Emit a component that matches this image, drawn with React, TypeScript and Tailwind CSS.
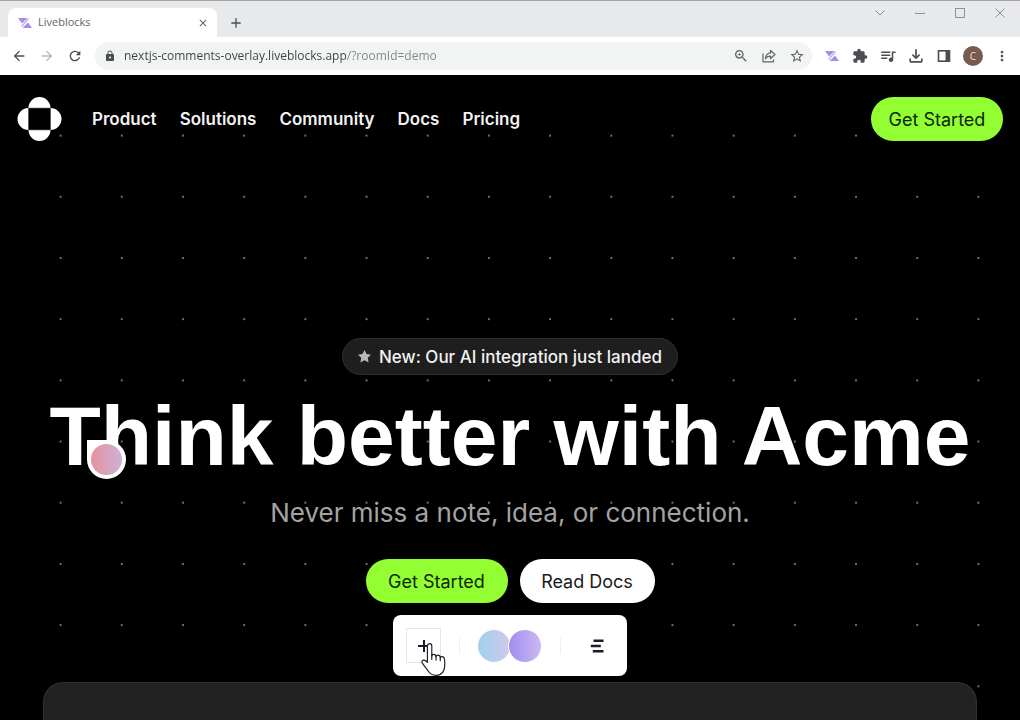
import React from 'react';
import {
    MdArrowBack,
    MdArrowForward,
    MdClose,
    MdExtension,
    MdAdd,
    MdLock,
    MdMoreVert,
    MdOutlineFileDownload,
    MdQueueMusic,
    MdRefresh,
    MdStarBorder,
    MdZoomIn,
} from 'react-icons/md';

const navLinks = ['Product', 'Solutions', 'Community', 'Docs', 'Pricing'];

const LiveblocksMark: React.FC = () => (
    <svg width="14" height="12" viewBox="0 0 14 12" className="shrink-0" aria-hidden="true">
        <path d="M0 1h9.500L4 6.500z" fill="#a78bea" />
        <path d="M14 11H4.500L10 5.500z" fill="#a78bea" />
        <path d="M3.500 9.500l7-8" stroke="#c3b2f2" strokeWidth="1.500" />
    </svg>
);

const ShareIcon: React.FC = () => (
    <svg width="16" height="16" viewBox="0 0 16 16" fill="none" stroke="#5f6368" strokeWidth="1.200" strokeLinejoin="round" aria-hidden="true">
        <path d="M2 5.500v8.300h10.500v-2.300" />
        <path d="M9.500 2.500l4.500 4-4.500 4V8.200c-2.500 0-4 .8-5 2.600.2-3.300 1.800-5.600 5-6z" />
    </svg>
);

const SidePanelIcon: React.FC = () => (
    <svg width="14" height="14" viewBox="0 0 14 14" className="shrink-0" aria-hidden="true">
        <rect x="1.500" y="1.800" width="11" height="10.400" fill="none" stroke="#4a4d51" strokeWidth="1.600" />
        <path d="M8.500 1.500h4v11h-4z" fill="#4a4d51" />
    </svg>
);

const HandCursor: React.FC = () => (
    <svg width="31" height="37" viewBox="0 0 28 34" aria-hidden="true">
        <path
            d="M9.500 2.500c1.300 0 2 .9 2 2.100v9.200c.1-1 .8-1.600 1.900-1.600 1.200 0 1.900.8 2 2 .3-.8 1-1.200 1.900-1.200 1.300 0 2 .9 2 2.200.3-.5.900-.8 1.600-.8 1.400 0 2.100 1 2.300 2.400.5 4.300.8 8.200-1.400 11.600-1.400 2.200-3.600 3.100-6.300 3.100-3.300 0-5.300-1-7-3.500l-5.400-7.200c-1.600-2.100-.2-3.700 1.600-3.200 1 .3 1.900 1.100 2.800 2.100V4.600c0-1.200.7-2.100 2-2.100z"
            fill="white"
            stroke="#222"
            strokeWidth="1.100"
            strokeLinejoin="round"
        />
        <path d="M11.500 13v4M15.400 14v3.500M19.300 15v3" stroke="#222" strokeWidth="1.100" strokeLinecap="round" />
    </svg>
);

const TabStrip: React.FC = () => (
    <div className="flex items-end h-[37px] bg-[#e8e9eb] border-t border-[#a5a5a7] pl-2">
        <div className="flex items-center w-[209px] h-[29px] bg-white rounded-t-lg pl-[10px] pr-2 gap-[6px] text-[11px] text-[#5f6368]">
            <LiveblocksMark />
            <span className="flex-1">Liveblocks</span>
            <button aria-label="Close tab"><MdClose size={12} /></button>
        </div>
        <button aria-label="New tab" className="flex items-center h-[29px] ml-[11px] text-[#4a4d51]"><MdAdd size={16} /></button>
        <div className="flex self-start ml-auto mt-[7px] mr-[14px] gap-[28px] text-[#8e9093]">
            <button aria-label="Search tabs">
                <svg width="12" height="10" viewBox="0 0 12 10" fill="none" stroke="currentColor"><path d="M1.500 2.500L6 7l4.500-4.500" /></svg>
            </button>
            <button aria-label="Minimize">
                <svg width="12" height="10" viewBox="0 0 12 10" fill="none" stroke="currentColor"><path d="M1 5.500h10" /></svg>
            </button>
            <button aria-label="Maximize">
                <svg width="12" height="10" viewBox="0 0 12 10" fill="none" stroke="currentColor"><path d="M1.500.5h9v9h-9z" /></svg>
            </button>
            <button aria-label="Close window">
                <svg width="12" height="10" viewBox="0 0 12 10" fill="none" stroke="currentColor"><path d="M1.500.5l9 9M10.500.5l-9 9" /></svg>
            </button>
        </div>
    </div>
);

const AddressBar: React.FC = () => (
    <div className="flex items-center h-[38px] bg-white pl-[11px] pr-[10px] text-[#4a4d51]">
        <div className="flex items-center gap-3">
            <button aria-label="Back"><MdArrowBack size={16} /></button>
            <button aria-label="Forward" className="text-[#b4b6b9]"><MdArrowForward size={16} /></button>
            <button aria-label="Reload"><MdRefresh size={16} /></button>
        </div>
        <div className="flex flex-1 items-center h-7 ml-3 pl-[9px] pr-[7px] rounded-full bg-[#f2f4f4]">
            <MdLock size={12} className="shrink-0" />
            <input
                aria-label="Address"
                defaultValue="nextjs-comments-overlay.liveblocks.app/?roomId=demo"
                className="flex-1 min-w-0 ml-2 text-[12px] outline-none text-transparent bg-clip-text bg-linear-to-r from-[#3c4043] from-[222px] to-[#808589] to-[222px]"
            />
            <div className="flex items-center gap-3 text-[#5f6368]">
                <button aria-label="Zoom"><MdZoomIn size={16} /></button>
                <button aria-label="Share"><ShareIcon /></button>
                <button aria-label="Bookmark"><MdStarBorder size={16} /></button>
            </div>
        </div>
        <div className="flex items-center gap-3 ml-3">
            <button aria-label="Liveblocks extension" className="flex justify-center w-4"><LiveblocksMark /></button>
            <button aria-label="Extensions" className="flex justify-center w-4"><MdExtension size={16} /></button>
            <button aria-label="Media" className="flex justify-center w-4"><MdQueueMusic size={18} className="shrink-0" /></button>
            <button aria-label="Downloads" className="flex justify-center w-4"><MdOutlineFileDownload size={20} className="shrink-0" /></button>
            <button aria-label="Side panel" className="flex justify-center w-4"><SidePanelIcon /></button>
            <button aria-label="Profile" className="-mx-px size-5 rounded-full bg-[#795a4c] text-[#e8ddd6] text-[10px] leading-5">C</button>
            <button aria-label="Menu"><MdMoreVert size={16} /></button>
        </div>
    </div>
);

const SiteHeader: React.FC = () => (
    <header className="relative flex items-center justify-between px-[17px] pt-[22px]">
        <div className="flex items-center gap-[30px]">
            <a href="#" aria-label="Acme home">
                <svg width="45" height="44" viewBox="0 0 45 44" fill="white">
                    <path d="M11.500 11a11 11 0 0 1 22 0zM11.500 33a11 11 0 0 0 22 0zM11.500 11a11 11 0 0 0 0 22zM33.500 11a11 11 0 0 1 0 22z" />
                    <path d="M11.500 11h22v22h-22z" fill="black" stroke="#777" strokeWidth=".6" />
                </svg>
            </a>
            <nav className="flex gap-[23px] text-[17px] leading-[28px] font-semibold text-[#f2f2f2]">
                {navLinks.map(link => (
                    <a key={link} href="#">{link}</a>
                ))}
            </nav>
        </div>
        <button className="h-11 w-[132px] rounded-full bg-[#93ff33] text-[#0d2600] text-[18px]">Get Started</button>
    </header>
);

const Hero: React.FC = () => (
    <section className="relative flex flex-col items-center mt-[197px]">
        <a href="#" className="flex items-center h-[37px] px-[15px] gap-2 rounded-full bg-[#1e1e1e] border border-[#303030] text-[17px] leading-[28px] font-medium text-[#f2f2f2]">
            <svg width="13" height="13" viewBox="0 0 12 12" fill="#b8b8b8" aria-hidden="true">
                <path d="M6 0l1.900 3.800 4.100.5-3 2.900.8 4.300L6 9.500l-3.800 2 .8-4.300-3-2.900 4.100-.5z" />
            </svg>
            New: Our AI integration just landed
        </a>
        <div className="relative mt-[10px]">
            <h1 className="font-['Liberation_Sans',sans-serif] text-[84px] leading-[102px] font-bold whitespace-nowrap text-white">Think better with Acme</h1>
            {/* pinned comment thread */}
            <button aria-label="Open comment" className="absolute left-[38px] top-[55px] size-[39px] p-1 rounded-full rounded-tl-[3px] bg-white shadow-lg">
                <span className="block size-full rounded-full bg-linear-to-r from-[#e4929c] to-[#cdb0d8]" />
            </button>
        </div>
        <p className="mt-[6px] text-[26px] leading-[40px] text-[#a3a3a3]">Never miss a note, idea, or connection.</p>
        <div className="flex gap-3 mt-[26px] text-[18px]">
            <button className="h-11 w-[142px] rounded-full bg-[#93ff33] text-[#0d2600]">Get Started</button>
            <button className="h-11 w-[135px] rounded-full bg-white text-[#1a1a1a]">Read Docs</button>
        </div>
    </section>
);

const CommentsToolbar: React.FC = () => (
    <div className="absolute bottom-11 left-1/2 -translate-x-1/2 flex items-center justify-between w-[234px] h-[61px] px-[13px] rounded-lg bg-white">
        <button aria-label="Place comment" className="relative flex items-center justify-center size-[35px] border border-[#e6e6ea]">
            <svg width="14" height="14" viewBox="0 0 14 14" stroke="#1b1b2b" strokeWidth="2"><path d="M7 1v12M1 7h12" /></svg>
            <span className="absolute left-3 top-3"><HandCursor /></span>
        </button>
        <span className="w-px h-4 bg-[#efeff2]" />
        <div className="flex">
            <span className="size-8 rounded-full bg-linear-to-r from-[#9fd2ee] to-[#cfc8ea]" />
            <span className="size-[34px] -ml-[2px] -my-px rounded-full border border-white bg-linear-to-r from-[#a08df0] to-[#cdb9f2]" />
        </div>
        <span className="w-px h-4 bg-[#efeff2]" />
        <button aria-label="All comments" className="flex items-center justify-center size-[35px]">
            <svg width="14" height="14" viewBox="0 0 14 14" stroke="#1b1b2b" strokeWidth="2.400"><path d="M3.500 1.700H13.500M.8 7h10M2.800 12.300h10.700" /></svg>
        </button>
    </div>
);

const App: React.FC = () => {
    return (
        <div className="relative flex flex-col h-screen overflow-hidden bg-black font-['Inter',sans-serif]">
            <div className="font-['Open_Sans',sans-serif]">
                <TabStrip />
                <AddressBar />
            </div>
            <main className="relative flex flex-col flex-1 min-h-0 bg-black">
                <div className="absolute inset-0 left-[30px] top-[30px] bg-[radial-gradient(circle,#6e6e6e_0,#6e6e6e_1px,transparent_1px)] bg-[size:6vw_6vw]" />
                <SiteHeader />
                <Hero />
                <div className="relative flex-1 mt-[79px] mx-[43px] rounded-t-[20px] border border-b-0 border-[#323232] bg-[#222]" />
            </main>
            <CommentsToolbar />
        </div>
    );
};

export default App;
